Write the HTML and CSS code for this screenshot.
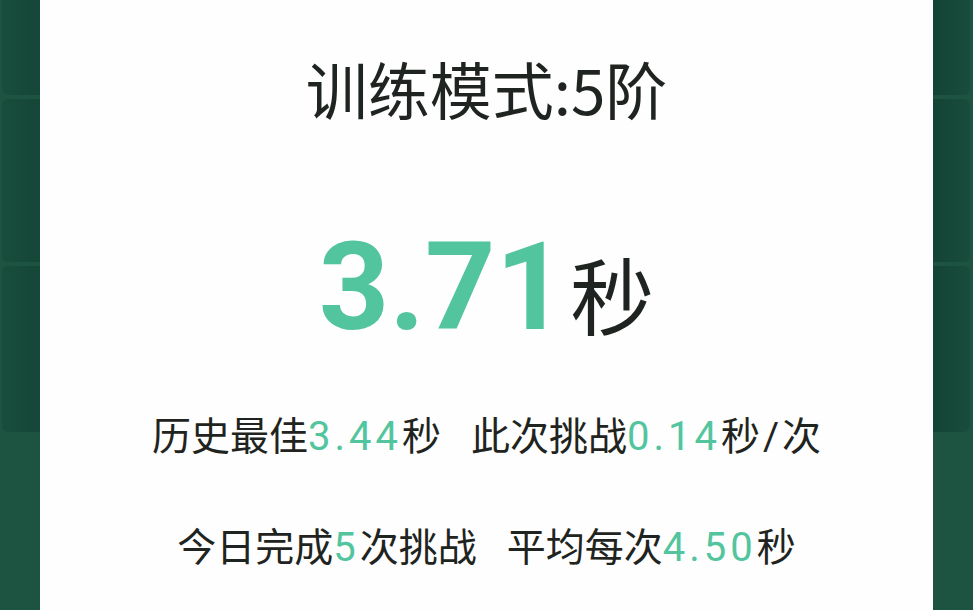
FILE: index.html
```html
<!DOCTYPE html>
<html lang="zh-CN">
<head>
<meta charset="utf-8">
<title>训练模式</title>
<link rel="stylesheet" href="styles.css">
</head>
<body>
<div class="screen">
  <div class="side side-left">
    <div class="tile tile-1"></div>
    <div class="tile tile-2"></div>
    <div class="tile tile-3"></div>
  </div>
  <main class="card">
    <h1 class="title">训练模式:5阶</h1>
    <div class="result"><span class="num">3.71</span><span class="unit">秒</span></div>
    <p class="stat">历史最佳<span class="hl">3.44</span>秒<span class="sep"></span>此次挑战<span class="hl">0.14</span>秒<span class="slash">/</span>次</p>
    <p class="stat stat-2">今日完成<span class="hl">5</span>次挑战<span class="sep"></span>平均每次<span class="hl">4.50</span>秒</p>
  </main>
  <div class="side side-right">
    <div class="tile tile-1"></div>
    <div class="tile tile-2"></div>
    <div class="tile tile-3"></div>
  </div>
</div>
</body>
</html>
```
FILE: styles.css
```css
html, body {
  margin: 0;
  padding: 0;
}
body {
  width: 973px;
  height: 610px;
  overflow: hidden;
  background: #1c5441;
  font-family: "Noto Sans CJK SC", "Noto Sans", sans-serif;
}
.screen {
  display: flex;
  height: 610px;
}
.side {
  width: 40px;
  display: flex;
  flex-direction: column;
  gap: 4px;
  flex: none;
}
.side-right {
  width: 40px;
  padding-right: 3px;
  box-sizing: border-box;
}
.tile {
  background: linear-gradient(to right, #184d3c, #154638);
}
.side-left .tile {
  margin-left: 2px;
  border-radius: 6px 0 0 6px;
}
.side-right .tile {
  border-radius: 0 6px 6px 0;
  background: linear-gradient(to right, #134536, #194c3d);
}
.tile-1 { height: 95px; border-top-left-radius: 0 !important; border-top-right-radius: 0 !important; }
.tile-2 { height: 163px; }
.tile-3 { height: 166px; }
.card {
  width: 893px;
  flex: none;
  background: #fdfefd;
  display: flex;
  flex-direction: column;
  align-items: center;
  color: #1f2420;
}
.title {
  margin: 57px 0 0;
  font-size: 62px;
  line-height: 62px;
  font-weight: 400;
}
.result {
  margin-top: 107px;
  display: flex;
  align-items: baseline;
  line-height: 123px;
}
.num {
  font-family: Roboto, "Liberation Sans", sans-serif;
  font-weight: 700;
  font-size: 123px;
  color: #52c59e;
}
.unit {
  font-size: 84px;
  margin-left: 4px;
}
.stat {
  margin: 57px 0 0;
  font-size: 39px;
  line-height: 44px;
  white-space: nowrap;
}
.stat-2 {
  margin-top: 63px;
}
.hl {
  font-family: Roboto, "Liberation Sans", sans-serif;
  color: #52c59e;
  letter-spacing: 4px;
  font-size: 40px;
}
.slash {
  font-family: Roboto, "Liberation Sans", sans-serif;
  margin: 0 3px;
}
.sep {
  display: inline-block;
  width: 30px;
}
```
